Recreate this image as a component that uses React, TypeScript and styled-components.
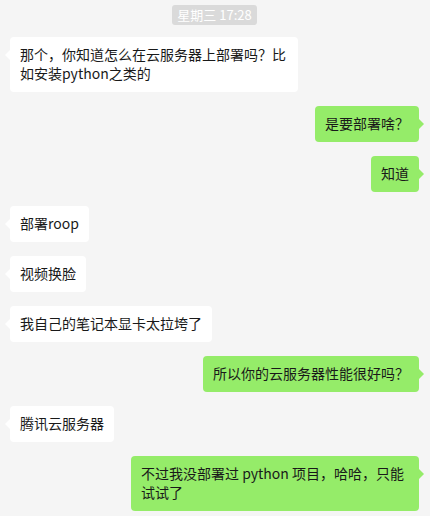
import React from 'react';
import styled, { createGlobalStyle } from 'styled-components';

const GlobalStyle = createGlobalStyle`
  html, body {
    margin: 0;
    padding: 0;
    background: #f5f5f5;
  }
  * {
    box-sizing: border-box;
  }
`;

const ChatWindow = styled.div`
  width: 430px;
  height: 516px;
  overflow: hidden;
  background: #f5f5f5;
  padding: 5px 11px 0 10px;
  display: flex;
  flex-direction: column;
  font-family: "Noto Sans CJK SC", "Noto Sans", sans-serif;
`;

const TimeRow = styled.div`
  display: flex;
  justify-content: center;
  margin-bottom: 12px;
`;

const TimeStamp = styled.span`
  background: #dadada;
  color: #ffffff;
  font-size: 13px;
  line-height: 20px;
  padding: 0 5px;
  border-radius: 3px;
`;

const MessageRow = styled.div<{ $mine?: boolean }>`
  display: flex;
  justify-content: ${(p) => (p.$mine ? 'flex-end' : 'flex-start')};
  margin-bottom: 14px;
`;

const Bubble = styled.div<{ $mine?: boolean }>`
  position: relative;
  max-width: 288px;
  padding: 8px 10px 9px;
  border-radius: 4px;
  background: ${(p) => (p.$mine ? '#95ec69' : '#ffffff')};
  color: #191919;
  font-size: 14px;
  line-height: 19px;
  word-break: break-all;

  &::before {
    content: '';
    position: absolute;
    top: 13px;
    ${(p) => (p.$mine ? 'right: -5px;' : 'left: -5px;')}
    width: 0;
    height: 0;
    border-top: 5px solid transparent;
    border-bottom: 5px solid transparent;
    ${(p) =>
      p.$mine
        ? 'border-left: 5px solid #95ec69;'
        : 'border-right: 5px solid #ffffff;'}
  }
`;

type Msg = { mine?: boolean; text: string };

const messages: Msg[] = [
  { text: '那个，你知道怎么在云服务器上部署吗？比如安装python之类的' },
  { mine: true, text: '是要部署啥？' },
  { mine: true, text: '知道' },
  { text: '部署roop' },
  { text: '视频换脸' },
  { text: '我自己的笔记本显卡太拉垮了' },
  { mine: true, text: '所以你的云服务器性能很好吗？' },
  { text: '腾讯云服务器' },
  { mine: true, text: '不过我没部署过 python 项目，哈哈，只能试试了' },
];

const App = () => {
  return (
    <>
      <GlobalStyle />
      <ChatWindow>
        <TimeRow>
          <TimeStamp>星期三 17:28</TimeStamp>
        </TimeRow>
        {messages.map((m, i) => (
          <MessageRow key={i} $mine={m.mine}>
            <Bubble $mine={m.mine}>{m.text}</Bubble>
          </MessageRow>
        ))}
      </ChatWindow>
    </>
  );
};

export default App;
